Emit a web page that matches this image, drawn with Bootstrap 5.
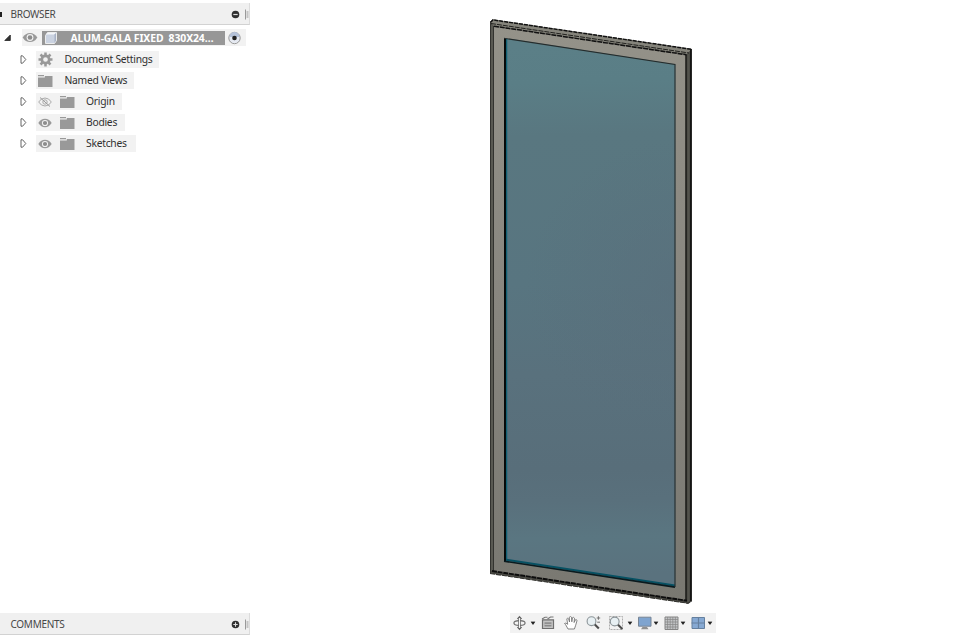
<!DOCTYPE html>
<html lang="en">
<head>
<meta charset="utf-8">
<meta name="viewport" content="width=device-width, initial-scale=1">
<title>Model browser</title>
<link href="https://cdn.jsdelivr.net/npm/bootstrap@5.3.0/dist/css/bootstrap.min.css" rel="stylesheet">
<style>
body{font-family:"Noto Sans","Open Sans",sans-serif;font-size:10.3px;line-height:17px;color:#303030;background:#fff;height:636px;width:960px}
svg{display:block;flex:none}
.side{width:250px;padding:3px 0 1px}
.bar{height:22px;background:#f0f0f0;border-bottom:1px solid #d2d2d2;border-right:1px solid #dcdcdc;padding-left:10.5px;color:#484848;font-size:10px;position:relative}
.bar span{letter-spacing:-.28px;padding-top:1px}
.tree{padding-top:4px}
.line{height:21px;white-space:nowrap}
.line.root{height:22px}
.tag{height:17px;background:#f2f2f2}
.tag span{letter-spacing:-.26px}
.arrow{width:7px;margin-right:9px;margin-left:20px}
.root .arrow{margin-left:4px;margin-right:11px}
.eye-root{margin:0 4px 0 0}
.name{background:#979797;color:#fff;font-weight:700;height:14px;line-height:14px;width:183px;white-space:pre;font-size:10.4px}
.tag svg+span{margin-left:11.5px}
.doc,.named{padding-left:2px}
.doc{width:123px}
.named{width:98px}
.sub{padding-left:2px}
.sub svg+svg{margin-left:8px}
.sub svg+span{margin-left:11px}
.origin{width:86px}
.bodies{width:89px}
.sketches{width:100px}
.tag .name span{margin-left:12.5px;letter-spacing:-.1px}
.tool{width:206px;height:20px;background:#f2f2f2;margin-left:260px}
.stage{height:600px;margin:10px 0 3px 230px}
.nub{position:absolute;left:0;top:9px;width:2px;height:5px;background:#222}
</style>
<script src="https://cdn.jsdelivr.net/npm/bootstrap@5.3.0/dist/js/bootstrap.bundle.min.js"></script>
</head>
<body class="d-flex overflow-hidden">
<svg width="0" height="0" class="position-absolute">
<defs>
<symbol id="eye" viewBox="0 0 14 10"><path d="M.3 5Q3 .8 7 .8T13.7 5Q11 9.2 7 9.2T.3 5Z" fill="#999"/><circle cx="7" cy="5" r="3.1" fill="#f2f2f2"/><circle cx="7" cy="5" r="2.1" fill="#8c8c8c"/></symbol>
<symbol id="eyeoff" viewBox="0 0 14 10"><g fill="none" stroke="#aaa"><path d="M.7 5Q3 1 7 1T13.3 5Q11 9 7 9T.7 5Z"/><circle cx="7" cy="5" r="2.2"/><path d="M2 .5 12 9.5" stroke="#999"/></g></symbol>
<symbol id="folder" viewBox="0 0 15 12"><path d="M0 0H6V1.3H0ZM0 2.4H6.8V1H14.5V12H0Z" fill="#999"/></symbol>
<symbol id="tri" viewBox="0 0 7 9"><path d="M1 .8V8.2H2.6L5.8 4.5 2.6.8Z" fill="#fff" stroke="#555" stroke-width=".9"/></symbol>
<symbol id="down" viewBox="0 0 5 4"><path d="M0 .3H5L2.5 3.7Z" fill="#222"/></symbol>
</defs></svg>

<aside class="side d-flex flex-column flex-shrink-0">
  <header class="bar d-flex align-items-center"><i class="nub"></i><span>BROWSER</span>
    <svg class="ms-auto" width="18" height="12"><circle cx="4.5" cy="6.5" r="3.8" fill="#303030"/><path d="M2.3 6.5H6.7" stroke="#ddd" stroke-width="1.2"/><path d="M14.5 1.5V11.5" stroke="#999"/><path d="M16.5 3V10" stroke="#c4c4c4" stroke-width="2"/></svg>
  </header>
  <div class="tree">
    <div class="line root d-flex align-items-start">
      <svg class="arrow mt-1" height="9" viewBox="0 0 7 9"><path d="M.8 7.5 6.3 2V7.5Z" fill="#333" stroke="#222" stroke-width=".8"/></svg>
      <div class="tag d-flex align-items-center">
        <svg class="eye-root" width="16" height="11"><use href="#eye"/></svg>
        <div class="name d-flex align-items-center">
          <svg width="16" height="14"><path d="M3.5 4.5 5.5 1.5H14.5V9.5L12.5 12.5H3.5Z" fill="#cbd3e1" stroke="#f2f2f2" stroke-width=".9" stroke-linejoin="round"/><path d="M4 3.5 5.5 2H14L12.5 3.5Z" fill="#f4f6fa"/><path d="M12.5 3.5 14 2V9.5L12.5 12Z" fill="#a8b2c6"/></svg>
          <span>ALUM-GALA FIXED  830X24…</span>
        </div>
        <svg width="21" height="14"><circle cx="9.5" cy="7" r="5.7" fill="#e6eaf2" stroke="#9a9a9a"/><path d="M4.5 6A5 5 0 0 1 14.5 6Z" fill="#b5c2d9"/><circle cx="9.5" cy="7" r="2.3" fill="#222"/></svg>
      </div>
    </div>
    <div class="line d-flex align-items-start">
      <svg class="arrow mt-1" height="9"><use href="#tri"/></svg>
      <div class="tag doc d-flex align-items-center">
        <svg width="15" height="15" viewBox="-7.5 -7.5 15 15"><circle r="3.7" fill="none" stroke="#999" stroke-width="2.7"/><g stroke="#999" stroke-width="2.5"><path d="M0-7V-4M0 7V4M-7 0H-4M7 0H4M-5-5-3-3M5 5 3 3M-5 5-3 3M5-5 3-3"/></g></svg>
        <span>Document Settings</span>
      </div>
    </div>
    <div class="line d-flex align-items-start">
      <svg class="arrow mt-1" height="9"><use href="#tri"/></svg>
      <div class="tag named d-flex align-items-center"><svg width="15" height="12"><use href="#folder"/></svg><span>Named Views</span></div>
    </div>
    <div class="line d-flex align-items-start">
      <svg class="arrow mt-1" height="9"><use href="#tri"/></svg>
      <div class="tag sub origin d-flex align-items-center"><svg width="14" height="10"><use href="#eyeoff"/></svg><svg width="15" height="12"><use href="#folder"/></svg><span>Origin</span></div>
    </div>
    <div class="line d-flex align-items-start">
      <svg class="arrow mt-1" height="9"><use href="#tri"/></svg>
      <div class="tag sub bodies d-flex align-items-center"><svg width="14" height="10"><use href="#eye"/></svg><svg width="15" height="12"><use href="#folder"/></svg><span>Bodies</span></div>
    </div>
    <div class="line d-flex align-items-start">
      <svg class="arrow mt-1" height="9"><use href="#tri"/></svg>
      <div class="tag sub sketches d-flex align-items-center"><svg width="14" height="10"><use href="#eye"/></svg><svg width="15" height="12"><use href="#folder"/></svg><span>Sketches</span></div>
    </div>
  </div>
  <footer class="bar d-flex align-items-center mt-auto"><span>COMMENTS</span>
    <svg class="ms-auto" width="18" height="12"><circle cx="4.5" cy="6.5" r="3.8" fill="#303030"/><path d="M2.3 6.5H6.7M4.5 4.3V8.7" stroke="#ddd" stroke-width="1.1"/><path d="M14.5 1.5V11.5" stroke="#999"/><path d="M16.5 3V10" stroke="#c4c4c4" stroke-width="2"/></svg>
  </footer>
</aside>

<main class="d-flex flex-column flex-grow-1">
  <svg class="stage" width="220" viewBox="480 10 220 600">
    <defs>
      <linearGradient id="glass" gradientUnits="userSpaceOnUse" x1="560" y1="45" x2="572" y2="575"><stop offset="0" stop-color="#5b7f87"/><stop offset=".07" stop-color="#5a7e86"/><stop offset=".17" stop-color="#597780"/><stop offset=".45" stop-color="#587580"/><stop offset=".62" stop-color="#59717d"/><stop offset=".8" stop-color="#586e7a"/><stop offset=".86" stop-color="#59707c"/><stop offset=".93" stop-color="#5a7681"/><stop offset="1" stop-color="#5a727e"/></linearGradient>
      <linearGradient id="metal" x1="0" y1="0" x2="0" y2="1"><stop offset="0" stop-color="#949289"/><stop offset=".5" stop-color="#88867f"/><stop offset="1" stop-color="#797871"/></linearGradient>
      <radialGradient id="cool" gradientUnits="userSpaceOnUse" cx="675" cy="290" r="150"><stop offset="0" stop-color="#5a6e7b" stop-opacity=".6"/><stop offset="1" stop-color="#5a6e7b" stop-opacity="0"/></radialGradient>
    </defs>
    <path d="M490 22 493 19.5 691.5 49V601L688 603.5 490 573.5Z" fill="#4c4c46"/>
    <path d="M490 22 493 19.5 691.5 49 687 54 494 26Z" fill="#85847b"/>
    <path d="M494 26 686 54.5V600.5L494 571.5Z" fill="url(#metal)"/>
    <path d="M490.5 23V573M493.5 26V571" stroke="#33332f"/>
    <path d="M492 25V571" stroke="#66665f"/>
    <path d="M686 55V601" stroke="#181816" stroke-width="1.5"/>
    <path d="M688.3 54V602" stroke="#55554e"/>
    <path d="M691 49V601.5" stroke="#080808" stroke-width="1.6"/>
    <path d="M490.3 22.5 493 19.9 691.5 49.3" fill="none" stroke="#111" stroke-width="1.5" stroke-dasharray="4 1"/>
    <path d="M491 23.5 689 53" stroke="#22221f" stroke-dasharray="5 1"/>
    <path d="M494 26.2 686.5 54.8" stroke="#111" stroke-width="1.5" stroke-dasharray="5 .8"/>
    <path d="M492 571 687 600.8" stroke="#0c0c0c" stroke-width="1.9" stroke-dasharray="5 .7"/>
    <path d="M490 573.5 688 603.3 691.5 600.8" fill="none" stroke="#33332f" stroke-width="1.1" stroke-dasharray="5 1"/>
    <path d="M504 38 675.3 64.2V587.3L504 561.3Z" fill="url(#glass)"/>
    <path d="M507 39 675 65V585L507 559Z" fill="url(#cool)"/>
    <path d="M505 38V561" stroke="#050808" stroke-width="2"/>
    <path d="M506.6 39V559" stroke="#116074" stroke-width="1.3"/>
    <path d="M506 559.7 675 585.5" stroke="#075163" stroke-width="2"/>
    <path d="M504 561.2 675 587.1" stroke="#0a1a1e" stroke-width="1.6"/>
    <path d="M504 38.3 675 64.4V587" fill="none" stroke="#252c2c" stroke-width="1.1"/>
  </svg>
  <div class="tool d-flex align-items-center">
    <svg width="206" height="20" viewBox="510 613 206 20">
      <g fill="none" stroke="#686868" stroke-width="1.1">
        <ellipse cx="519.5" cy="623" rx="5.6" ry="2.4"/><path d="M519.5 617V629" stroke-width="2.6"/><path d="M519.5 618V628" stroke="#f4f4f4"/><path d="M517.3 619 519.5 616.5 521.7 619M517.3 627 519.5 629.5 521.7 627"/>
      </g>
      <path d="M542.5 619.8H553.5V628.5H542.5Z" fill="#c4c4c4" stroke="#6e6e6e" stroke-width="1.2"/><path d="M544.5 622.3H551.5V626.5H544.5Z" fill="#8b8b8b"/><path d="M544.5 624.4H551.5" stroke="#ddd" stroke-width=".7"/><path d="M542 619 545 617.3H547.5M547.5 619 550.5 617H553.5" fill="none" stroke="#777" stroke-width="1.1"/>
      <path d="M568 629 565.7 624.8 564.5 623.5Q565.7 622.2 567.7 624.3L566.8 618.8Q567.8 617.5 568.8 619L569.5 622 569.3 617.2Q570.5 615.9 571.5 617.2L571.8 621.8 572.5 617.7Q573.8 616.8 574.5 618.2L574.1 622.5 575.5 619.7Q576.8 619.2 577 620.7L575.5 625.8 574.4 629Z" fill="#fff" stroke="#777" stroke-width=".9"/>
      <circle cx="591.5" cy="621.2" r="4.4" fill="#e8f0f3" stroke="#8b9498" stroke-width="1.1"/><path d="M594.8 624.5 598.8 628.5" stroke="#4c4c4c" stroke-width="2.1"/><path d="M596.7 618H600.2M598.4 616.2V619.8M597.2 622.2H600" stroke="#666" stroke-width=".9"/>
      <path d="M609.5 616.5H622.5V629.5H609.5Z" fill="none" stroke="#9b9b9b" stroke-width=".8" stroke-dasharray="2 1"/><circle cx="614.7" cy="621.5" r="4.4" fill="#e8f0f3" stroke="#8b9498" stroke-width="1.1"/><path d="M618 624.8 622.3 629" stroke="#4c4c4c" stroke-width="2.1"/>
      <path d="M638.5 617.2H651V626.2H638.5Z" fill="#7fa4cf" stroke="#778494"/><path d="M642.5 627H647L648.5 629.3H641Z" fill="#909090"/>
      <path d="M665 617H678V629.5H665Z" fill="#c3c5c7" stroke="#858585"/><path d="M667.6 617V629.5M670.2 617V629.5M672.8 617V629.5M675.4 617V629.5M665 619.5H678M665 622H678M665 624.5H678M665 627H678" stroke="#858585" stroke-width=".7"/>
      <path d="M692 617.5H704.5V628.5H692Z" fill="#86a9d3" stroke="#65809f"/><path d="M698.5 617V629M691.5 623H705" stroke="#65809f" stroke-width="1.2"/>
      <use href="#down" x="530.5" y="621.3" width="5" height="4"/><use href="#down" x="627.5" y="621.3" width="5" height="4"/><use href="#down" x="653.5" y="621.3" width="5" height="4"/><use href="#down" x="680.5" y="621.3" width="5" height="4"/><use href="#down" x="707.5" y="621.3" width="5" height="4"/>
    </svg>
  </div>
</main>
</body>
</html>
